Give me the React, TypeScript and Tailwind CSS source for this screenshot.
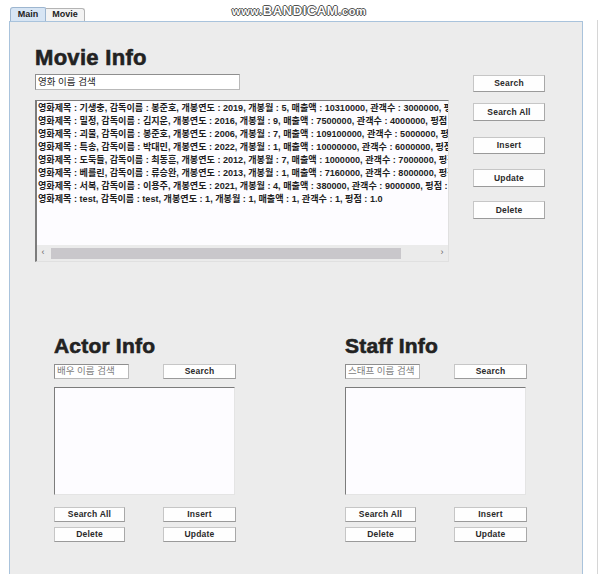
import React from "react";

const movies = [
  "영화제목 : 기생충, 감독이름 : 봉준호, 개봉연도 : 2019, 개봉월 : 5, 매출액 : 10310000, 관객수 : 3000000, 평점 : 4.5",
  "영화제목 : 밀정, 감독이름 : 김지운, 개봉연도 : 2016, 개봉월 : 9, 매출액 : 7500000, 관객수 : 4000000, 평점 : 4.0",
  "영화제목 : 괴물, 감독이름 : 봉준호, 개봉연도 : 2006, 개봉월 : 7, 매출액 : 109100000, 관객수 : 5000000, 평점 : 4.2",
  "영화제목 : 특송, 감독이름 : 박대민, 개봉연도 : 2022, 개봉월 : 1, 매출액 : 10000000, 관객수 : 6000000, 평점 : 3.5",
  "영화제목 : 도둑들, 감독이름 : 최동훈, 개봉연도 : 2012, 개봉월 : 7, 매출액 : 1000000, 관객수 : 7000000, 평점 : 4.1",
  "영화제목 : 베를린, 감독이름 : 류승완, 개봉연도 : 2013, 개봉월 : 1, 매출액 : 7160000, 관객수 : 8000000, 평점 : 3.9",
  "영화제목 : 서복, 감독이름 : 이용주, 개봉연도 : 2021, 개봉월 : 4, 매출액 : 380000, 관객수 : 9000000, 평점 : 3.0",
  "영화제목 : test, 감독이름 : test, 개봉연도 : 1, 개봉월 : 1, 매출액 : 1, 관객수 : 1, 평점 : 1.0",
];

function Btn({ label, className = "" }: { label: string; className?: string }) {
  return (
    <button
      className={
        "flex items-center justify-center bg-[#fefefe] border border-[#c6c6c6] border-b-[#9a9a9a] border-r-[#a8a8a8] text-[8.5px] font-bold text-[#2a2a2a] tracking-[0.2px] whitespace-nowrap " +
        className
      }
    >
      {label}
    </button>
  );
}

function Field({ text, muted }: { text: string; muted?: boolean }) {
  return (
    <div
      className={
        "h-[15px] w-[75px] bg-white border border-[#b9b9b9] border-t-[#8e8e8e] border-l-[#8e8e8e] flex items-center px-[2px] text-[9.5px] whitespace-nowrap overflow-hidden " +
        (muted ? "text-[#7e7e7e]" : "text-[#222]")
      }
    >
      {text}
    </div>
  );
}

function Section({ title, placeholder }: { title: string; placeholder: string }) {
  return (
    <div className="flex flex-col w-[182px]">
      <h2 className="text-[21px] leading-[21px] h-[21px] font-bold text-[#222] tracking-[0.2px] [-webkit-text-stroke:0.6px_#222]">
        {title}
      </h2>
      <div className="mt-[8px] flex items-center justify-between">
        <Field text={placeholder} muted />
        <Btn label="Search" className="w-[73px] h-[15px]" />
      </div>
      <div className="mt-[8px] h-[108px] w-[181px] bg-[#fdfcff] border border-[#e4e4e4] border-t-[#7c7c7c] border-l-[#7c7c7c]" />
      <div className="mt-[12px] flex justify-between">
        <Btn label="Search All" className="w-[71px] h-[15px]" />
        <Btn label="Insert" className="w-[73px] h-[15px]" />
      </div>
      <div className="mt-[5px] flex justify-between">
        <Btn label="Delete" className="w-[71px] h-[15px]" />
        <Btn label="Update" className="w-[73px] h-[15px]" />
      </div>
    </div>
  );
}

export default function App() {
  return (
    <div className="relative w-[600px] h-[574px] overflow-hidden bg-white font-['Liberation_Sans','Noto_Sans_CJK_KR',sans-serif]">
      {/* watermark */}
      <div className="absolute left-[232px] top-[1px] text-[13px] font-bold text-white tracking-[0.6px] [text-shadow:0_0_1px_#444,1px_0_0_#555,-1px_0_0_#555,0_1px_0_#555,0_-1px_0_#555]">
        <span className="text-[11px]">www.</span>BANDICAM<span className="text-[11px]">.com</span>
      </div>
      <div className="absolute right-[2px] top-[20px] h-[554px] w-px bg-[#d6d6d6]" />

      {/* tabs */}
      <div className="h-[21px] flex items-end pl-[10px]">
        <div className="h-[14px] w-[36px] flex items-center justify-center bg-[#d7e5f4] border border-b-0 border-[#9db6d0] rounded-tl-[3px] rounded-tr-[2px] text-[9px] font-bold text-[#222]">
          Main
        </div>
        <div className="h-[13px] w-[39px] flex items-center justify-center bg-[#f3f3f3] border border-b-0 border-l-0 border-[#b4b4b4] rounded-tr-[3px] text-[9px] font-bold text-[#222]">
          Movie
        </div>
      </div>

      {/* panel */}
      <div className="ml-[9px] w-[574px] h-[560px] bg-[#ececec] border border-[#a9c3dc] border-b-0 flex flex-col">
        {/* Movie section */}
        <div className="mt-[25px] pl-[25px] flex">
          <div className="flex flex-col w-[414px]">
            <h1 className="text-[22px] leading-[22px] h-[22px] font-bold text-[#222] tracking-[0.3px] [-webkit-text-stroke:0.6px_#222]">
              Movie Info
            </h1>
            <div className="mt-[5px] h-[16px] w-[205px] bg-white border border-[#b9b9b9] border-t-[#8e8e8e] border-l-[#8e8e8e] flex items-center px-[2px] text-[9.5px] text-[#222]">
              영화 이름 검색
            </div>
            <div className="mt-[10px] h-[162px] w-[414px] flex flex-col bg-[#fdfcff] border border-[#e0e0e0] border-l-2 border-t-[#7c7c7c] border-l-[#7c7c7c]">
              <div className="flex-1 overflow-hidden pl-[1px] pt-[1px]">
                {movies.map((m) => (
                  <div
                    key={m}
                    className="h-[13px] leading-[13px] whitespace-nowrap text-[9.1px] font-bold text-[#1e1e1e]"
                  >
                    {m}
                  </div>
                ))}
              </div>
              <div className="h-[16px] bg-[#ebebeb] flex items-center px-[2px] gap-[4px] text-[9px] text-[#666]">
                <span className="w-[8px] text-center">‹</span>
                <div className="h-[11px] w-[350px] bg-[#c9c7cb]" />
                <div className="flex-1" />
                <span className="w-[8px] text-center">›</span>
              </div>
            </div>
          </div>

          <div className="ml-[24px] flex flex-col w-[72px]">
            <Btn label="Search" className="mt-[28px] h-[17px] w-[72px]" />
            <Btn label="Search All" className="mt-[11px] h-[18px] w-[72px]" />
            <Btn label="Insert" className="mt-[16px] h-[17px] w-[72px]" />
            <Btn label="Update" className="mt-[15px] h-[18px] w-[72px]" />
            <Btn label="Delete" className="mt-[14px] h-[18px] w-[72px]" />
          </div>
        </div>

        {/* Actor / Staff */}
        <div className="mt-[73px] pl-[44px] flex gap-[109px]">
          <Section title="Actor Info" placeholder="배우 이름 검색" />
          <Section title="Staff Info" placeholder="스태프 이름 검색" />
        </div>
      </div>
    </div>
  );
}
